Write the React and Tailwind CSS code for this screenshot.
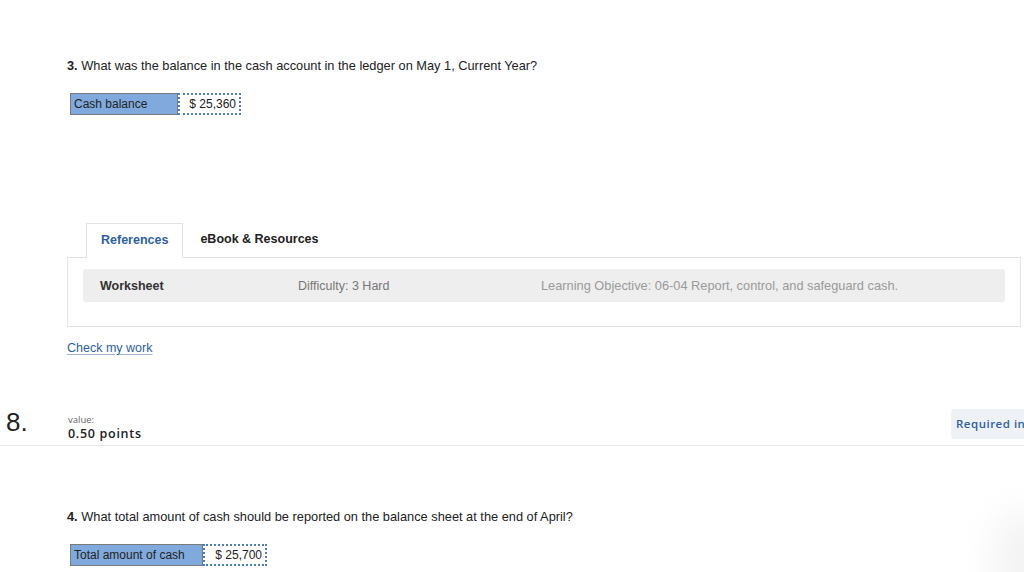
import React from 'react';

const AnswerRow = ({ label, value, labelWidth, valueWidth }) => (
  <div className="flex items-stretch h-[22px] text-[12px] text-[#222]">
    <div
      className={`${labelWidth} bg-[#80aadd] border border-[#7a7a7a] flex items-center pl-[3px]`}
    >
      {label}
    </div>
    <div
      className={`${valueWidth} border-2 border-dotted border-[#4a7ec4] flex items-center justify-end pr-[3px] bg-white`}
    >
      {value}
    </div>
  </div>
);

const App = () => {
  return (
    <div className="w-[1024px] h-[572px] bg-white overflow-hidden relative font-['Liberation_Sans',Arial,sans-serif] text-[#222]">
      {/* question 3 */}
      <div className="pl-[67px] pt-[58px]">
        <p className="text-[12.8px] leading-[16px]">
          <span className="font-bold">3.</span> What was the balance in the cash account in the ledger on May 1, Current Year?
        </p>
        <div className="mt-[19px] ml-[3px]">
          <AnswerRow label="Cash balance" value="$ 25,360" labelWidth="w-[108px]" valueWidth="w-[63px]" />
        </div>
      </div>

      {/* references */}
      <div className="ml-[67px] mr-[3px] mt-[107px]">
        <div className="flex items-end h-[35px] pl-[19px]">
          <div className="h-[35px] px-[14px] pb-[2px] flex items-center border border-b-0 border-[#e3e3e3] bg-white text-[12.5px] font-bold text-[#2f5f9e] relative top-[1px]">
            References
          </div>
          <div className="h-[35px] px-[17px] flex items-center text-[12.5px] font-bold text-[#222]">
            eBook &amp; Resources
          </div>
        </div>
        <div className="border border-[#e3e3e3] h-[70px] px-[15px] pt-[11px]">
          <div className="bg-[#eeeeee] rounded-[3px] h-[33px] flex items-center text-[12.5px] pt-[1px]">
            <span className="w-[215px] pl-[17px] font-bold text-[#333]">Worksheet</span>
            <span className="w-[243px] text-[#777]">Difficulty: 3 Hard</span>
            <span className="text-[#9a9a9a] text-[12.8px]">Learning Objective: 06-04 Report, control, and safeguard cash.</span>
          </div>
        </div>
        <a href="#" className="inline-block mt-[12px] text-[12.5px] text-[#2f5f9e] underline decoration-[#9fb4d4] underline-offset-2">
          Check my work
        </a>
      </div>

      {/* question 8 header */}
      <div className="mt-[49px] h-[38px] border-b border-[#e6e6e6] flex items-start relative">
        <div className="w-[68px] pl-[6px] text-[26px] leading-[26px] text-[#222] font-['Liberation_Sans',Arial,sans-serif] mt-[1px]">
          8.
        </div>
        <div className="flex flex-col font-['Open_Sans',sans-serif] mt-[6px]">
          <span className="text-[9.5px] leading-[12px] text-[#666]">value:</span>
          <span className="text-[12.5px] leading-[15px] font-semibold tracking-[0.7px] text-[#222]">0.50 points</span>
        </div>
        <div className="absolute left-[951px] top-[1px] h-[30px] pl-[5px] pr-[20px] bg-[#eef1f6] rounded-l-[4px] flex items-center whitespace-nowrap font-['Open_Sans',sans-serif] text-[11.5px] font-semibold tracking-[0.5px] text-[#2f5f9e]">
          Required in
        </div>
      </div>

      {/* question 4 */}
      <div className="pl-[67px] pt-[63px]">
        <p className="text-[12.8px] leading-[16px]">
          <span className="font-bold">4.</span> What total amount of cash should be reported on the balance sheet at the end of April?
        </p>
        <div className="mt-[19px] ml-[3px]">
          <AnswerRow label="Total amount of cash" value="$ 25,700" labelWidth="w-[133px]" valueWidth="w-[64px]" />
        </div>
      </div>

      {/* faint shadow at the bottom right corner */}
      <div className="absolute right-[-30px] bottom-[-40px] w-[60px] h-[100px] rounded-full bg-[#ebebeb] blur-[18px] opacity-60" />
    </div>
  );
};

export default App;
